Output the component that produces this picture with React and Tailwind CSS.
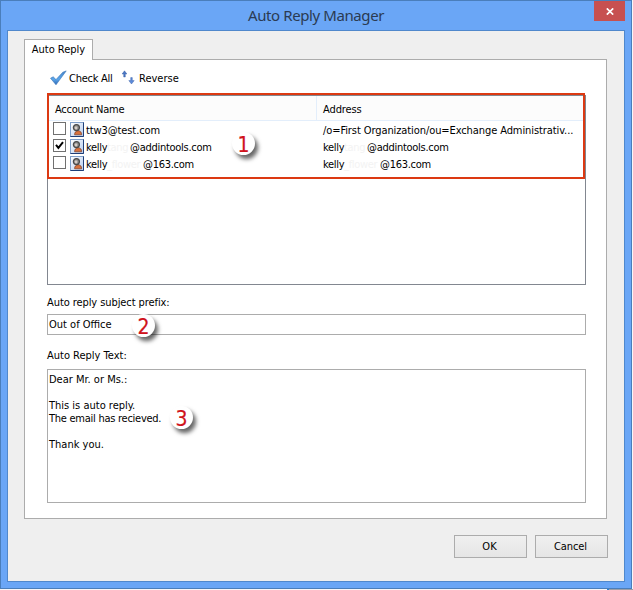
import React, { useState } from 'react';

const ACCOUNTS = [
  { name: 'ttw3@test.com', address: '/o=First Organization/ou=Exchange Administrativ...', checked: false },
  { user: 'kelly', ghost: 'tang', domain: '@addintools.com', gap: 'w-[23px]', checked: true },
  { user: 'kelly', ghost: '_flower', domain: '@163.com', gap: 'w-[36px]', checked: false },
];

function CheckIcon() {
  return (
    <svg width="17" height="16" viewBox="0 0 17 16" className="block">
      <defs>
        <linearGradient id="tick" x1="0" y1="0" x2="0" y2="1">
          <stop offset="0" stopColor="#4a86c8" />
          <stop offset="0.6" stopColor="#5ba6ea" />
          <stop offset="1" stopColor="#2c66b4" />
        </linearGradient>
      </defs>
      <path d="M0.5 8.2 L3.2 6.8 L6 9.6 L12.8 2.2 L16.2 0.9 L6 14.8 Z" fill="url(#tick)" stroke="#3a75b8" strokeWidth="0.6" />
    </svg>
  );
}

function ReverseIcon() {
  return (
    <svg width="14" height="15" viewBox="0 0 14 15" className="block">
      <path d="M3.5 0.8 L5.9 4 H4.3 V7 H2.7 V4 H1.1 Z" fill="#4b78c4" stroke="#2f569f" strokeWidth="0.4" />
      <path d="M10.5 14 L7.8 10.6 H9.7 V7.6 H11.3 V10.6 H13.2 Z" fill="#5b8ada" stroke="#2f569f" strokeWidth="0.4" />
    </svg>
  );
}

function AccountIcon() {
  return (
    <svg width="14" height="15" viewBox="0 0 14 15" className="block">
      <defs>
        <linearGradient id="card" x1="0" y1="0" x2="1" y2="1">
          <stop offset="0" stopColor="#ffffff" />
          <stop offset="1" stopColor="#b4cbee" />
        </linearGradient>
      </defs>
      <rect x="0.5" y="0.5" width="13" height="14" fill="url(#card)" stroke="#7f9fca" />
      <path d="M13.5 0.5 V14.5 H0.5" fill="none" stroke="#1f3f78" />
      <path d="M4.6 12.8 C4.4 10.4 6 9 8 8.6 C10.4 8.8 11.8 10.4 11.6 12.8 Z" fill="#d8713c" stroke="#7a4028" strokeWidth="0.7" />
      <circle cx="6.4" cy="5.6" r="3" fill="#8f8f8f" stroke="#4a4a4a" strokeWidth="1.3" />
      <circle cx="6" cy="6" r="1.4" fill="#d4ccc6" />
    </svg>
  );
}

function Checkbox({ checked, onChange }) {
  return (
    <button onClick={onChange} className="block h-[13px] w-[13px] shrink-0 border border-[#707070] bg-white">
      {checked && (
        <svg width="11" height="11" viewBox="0 0 11 11" className="block">
          <path d="M2 4.8 L4.4 7.8 L9 2.2" fill="none" stroke="#000" strokeWidth="2" />
        </svg>
      )}
    </button>
  );
}

function Badge({ className, children }) {
  return (
    <div className={`absolute flex h-[23px] w-[23px] items-center justify-center rounded-full bg-white pt-[3px] font-['DejaVu_Sans_Condensed','DejaVu_Sans',sans-serif] text-[21px] leading-none tracking-normal text-[#d0121b] shadow-[3px_4px_4px_rgba(0,0,0,0.6)] [-webkit-text-stroke:0.2px_#d0121b] ${className}`}>
      {children}
    </div>
  );
}

function Masked({ account }) {
  if (!account.user) return null;
  return (
    <>
      <span className="w-[21px] tracking-[-0.3px]">{account.user}</span>
      <span className={`overflow-visible tracking-[-0.3px] text-[#f3f3f3] ${account.gap}`}>{account.ghost}</span>
      <span className="tracking-[-0.27px]">{account.domain}</span>
    </>
  );
}

export default function App() {
  const [accounts, setAccounts] = useState(ACCOUNTS);

  const toggle = idx => {
    setAccounts(accounts.map((a, i) => (i === idx ? { ...a, checked: !a.checked } : a)));
  };

  return (
    <div className="flex h-[590px] w-[633px] flex-col overflow-hidden bg-[#f6f7f9] font-['DejaVu_Sans_Condensed','DejaVu_Sans',sans-serif] text-[11px] leading-[13px] whitespace-nowrap text-black">
      <div className="flex h-[589px] w-[632px] shrink-0 flex-col border border-[#4a7ebb] bg-[#6aa6f6] px-[6px] pb-[6px]">
        <div className="relative flex h-[29px] shrink-0 items-center justify-center">
          <h1 className="font-['Noto_Sans'] text-[15px] leading-[29px] tracking-[-0.4px] text-[#2b3b52]">Auto Reply Manager</h1>
          <button className="absolute top-0 right-0 flex h-[20px] w-[31px] items-center justify-center bg-[#c75050] pt-px">
            <svg width="8" height="7" viewBox="0 0 8 7">
              <path d="M0.8 0.4 L7.2 6.6 M7.2 0.4 L0.8 6.6" stroke="#fff" strokeWidth="1.7" />
            </svg>
          </button>
        </div>

        <div className="flex h-[552px] flex-col border border-[#5088cc] bg-[#efefef] pt-[8px] pr-[17px] pl-[16px]">
          <div className="relative z-10 -mb-px flex h-[21px] w-[69px] shrink-0 justify-center border border-b-0 border-[#acacac] bg-white pt-[3px]">
            Auto Reply
          </div>
          <div className="h-[460px] w-[583px] shrink-0 border border-[#acacac] bg-white pt-[10px] pl-[22px]">
            <div className="flex h-[24px] items-start">
              <div className="ml-[3px]"><CheckIcon /></div>
              <span className="mt-[2px] ml-[2px] w-[43px] tracking-[-0.25px]">Check All</span>
              <div className="ml-[9px]"><ReverseIcon /></div>
              <span className="mt-[2px] ml-[4px]">Reverse</span>
            </div>

            <div className="relative mt-px h-[190px] w-[539px] border border-[#828790]">
              <div className="mb-px flex h-[25px] border-b border-[#e3eefb] bg-[#fcfcfc]">
                <div className="w-[269px] border-r border-[#e3eefb] pt-[7px] pl-[7px] tracking-[-0.25px]">Account Name</div>
                <div className="pt-[7px] pl-[6px] tracking-[-0.1px]">Address</div>
              </div>
              {accounts.map((account, idx) => (
                <div key={idx} className="flex h-[17px] pl-[5px]">
                  <Checkbox checked={account.checked} onChange={() => toggle(idx)} />
                  <div className="ml-[4px]"><AccountIcon /></div>
                  <div className="mt-[2px] ml-[2px] flex w-[237px] tracking-[-0.1px]">{account.name}<Masked account={account} /></div>
                  <div className="mt-[2px] flex tracking-[-0.09px]">{account.address}<Masked account={account} /></div>
                </div>
              ))}
              <div className="pointer-events-none absolute -top-[3px] -left-px h-[86px] w-[538px] border-2 border-[#dc3912]" />
              <Badge className="top-[36px] left-[184px]">1</Badge>
            </div>

            <div className="mt-[11px] tracking-[-0.08px]">Auto reply subject prefix:</div>
            <div className="relative mt-[5px] h-[21px] w-[539px] border border-[#acacac] pt-[3px] pl-px">
              Out of Office
              <Badge className="-top-[1px] left-[84px]">2</Badge>
            </div>

            <div className="mt-[14px]">Auto Reply Text:</div>
            <div className="relative mt-[7px] h-[134px] w-[539px] border border-[#acacac] pt-[3px] pl-px whitespace-pre">
              {'Dear Mr. or Ms.:\n\nThis is auto reply.\n'}
              <span className="tracking-[-0.26px]">The email has recieved.</span>
              {'\n\nThank you.'}
              <Badge className="top-[36px] left-[122px]">3</Badge>
            </div>
          </div>

          <div className="mt-[16px] -mr-px flex justify-end gap-[8px]">
            <button className="h-[23px] w-[73px] border border-[#acacac] bg-linear-to-b from-[#f0f0f0] to-[#e5e5e5] pr-[2px]">OK</button>
            <button className="h-[23px] w-[73px] border border-[#acacac] bg-linear-to-b from-[#f0f0f0] to-[#e5e5e5] pr-[2px] tracking-[-0.1px]">Cancel</button>
          </div>
        </div>
      </div>
      <div className="h-px w-[26px] shrink-0 self-end border-l-2 border-[#2f7fd0] bg-[#9a9fa8]" />
    </div>
  );
}
